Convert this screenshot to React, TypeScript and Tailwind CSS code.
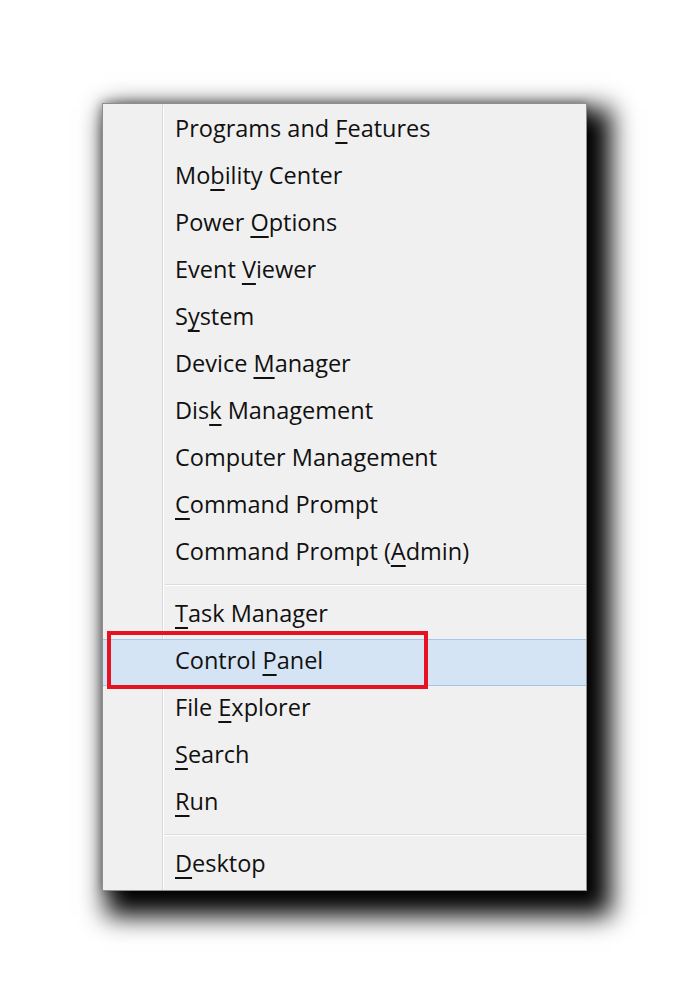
import React from "react";

type Item = { label: string; key?: number; highlight?: boolean } | "sep";

const items: Item[] = [
  { label: "Programs and Features", key: 13 },
  { label: "Mobility Center", key: 2 },
  { label: "Power Options", key: 6 },
  { label: "Event Viewer", key: 6 },
  { label: "System", key: 1 },
  { label: "Device Manager", key: 7 },
  { label: "Disk Management", key: 3 },
  { label: "Computer Management" },
  { label: "Command Prompt", key: 0 },
  { label: "Command Prompt (Admin)", key: 16 },
  "sep",
  { label: "Task Manager", key: 0 },
  { label: "Control Panel", key: 8, highlight: true },
  { label: "File Explorer", key: 5 },
  { label: "Search", key: 0 },
  { label: "Run", key: 0 },
  "sep",
  { label: "Desktop", key: 0 },
];

const Label = ({ label, k }: { label: string; k?: number }) => {
  if (k === undefined) return <span>{label}</span>;
  return (
    <span>
      {label.slice(0, k)}
      <span className="underline decoration-2 underline-offset-[5px]">{label[k]}</span>
      {label.slice(k + 1)}
    </span>
  );
};

export default function App() {
  return (
    <div className="min-h-[1000px] w-[695px] bg-white pl-[102px] pt-[103px]">
      <div className="relative flex w-[485px] flex-col border border-[#8e8e8e] bg-[#f0f0f0] shadow-[14px_15px_24px_10px_#000,0_0_10px_rgba(0,0,0,0.35)]">
        <div className="flex h-[3px]">
          <div className="w-[60px] border-r border-r-[#dadada]" />
        </div>
        {items.map((it, i) =>
          it === "sep" ? (
            <div key={i} className="flex h-[15px] items-stretch">
              <div className="w-[60px] shrink-0 border-r border-r-[#dadada]" />
              <div className="flex flex-1 items-center border-l border-l-white pl-px">
                <div className="h-[2px] w-full border-y border-t-[#dcdcdc] border-b-white" />
              </div>
            </div>
          ) : (
            <div
              key={i}
              className={
                it.highlight
                  ? "flex h-[47px] items-stretch border-y border-[#a5c6ec] bg-[#d5e4f4]"
                  : "flex h-[47px] items-stretch"
              }
            >
              <div
                className={
                  it.highlight
                    ? "w-[60px] shrink-0"
                    : "w-[60px] shrink-0 border-r border-r-[#dadada]"
                }
              />
              <div
                className={
                  it.highlight
                    ? "flex flex-1 items-center pb-[3px] pl-[12px]"
                    : "flex flex-1 items-center border-l border-l-white pb-[3px] pl-[11px]"
                }
              >
                <span className="font-['Open_Sans','Noto_Sans',sans-serif] text-[23.5px] leading-none text-[#111]">
                  <Label label={it.label} k={it.key} />
                </span>
              </div>
            </div>
          )
        )}
        <div className="flex h-[1px]">
          <div className="w-[60px] border-r border-r-[#dadada]" />
        </div>
        <div className="absolute left-[4px] top-[527px] h-[58px] w-[321px] border-4 border-[#e8111f]" />
      </div>
    </div>
  );
}
